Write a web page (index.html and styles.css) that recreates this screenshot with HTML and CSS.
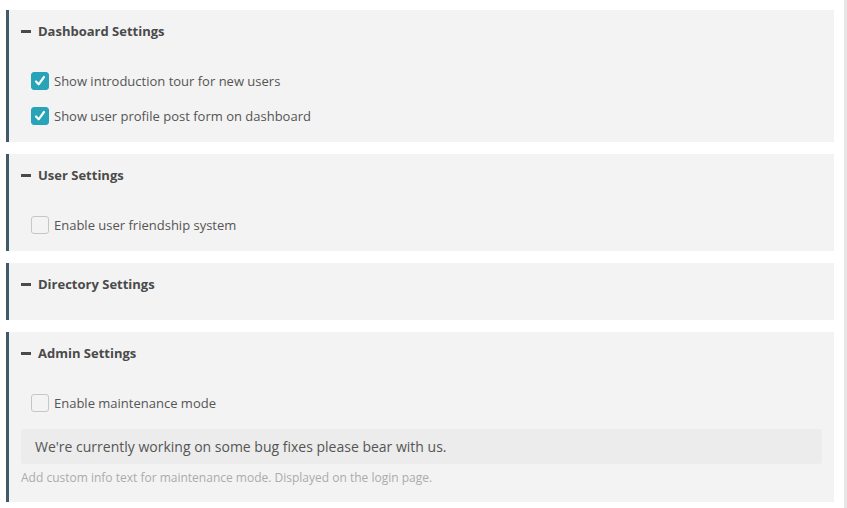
FILE: index.html
```html
<!DOCTYPE html>
<html>

<head>
  <meta charset="utf-8">
  <meta name="viewport" content="width=device-width">
  <title>Settings</title>
  <link rel="stylesheet" href="styles.css">
</head>

<body>
  <div class="panel">
    <h4 class="panel-title"><span class="toggle"></span>Dashboard Settings</h4>
    <div class="panel-body">
      <label class="option"><span class="box checked"><svg viewBox="0 0 18 18"><path d="M4.5 9.5l3 3.2 6-8.2" /></svg></span>Show introduction tour for new users</label>
      <label class="option"><span class="box checked"><svg viewBox="0 0 18 18"><path d="M4.5 9.5l3 3.2 6-8.2" /></svg></span>Show user profile post form on dashboard</label>
    </div>
  </div>

  <div class="panel">
    <h4 class="panel-title"><span class="toggle"></span>User Settings</h4>
    <div class="panel-body">
      <label class="option"><span class="box"></span>Enable user friendship system</label>
    </div>
  </div>

  <div class="panel">
    <h4 class="panel-title"><span class="toggle"></span>Directory Settings</h4>
    <div class="panel-body empty"></div>
  </div>

  <div class="panel">
    <h4 class="panel-title"><span class="toggle"></span>Admin Settings</h4>
    <div class="panel-body">
      <label class="option"><span class="box"></span>Enable maintenance mode</label>
      <div class="field">We're currently working on some bug fixes please bear with us.</div>
      <p class="help">Add custom info text for maintenance mode. Displayed on the login page.</p>
    </div>
  </div>
</body>
</html>
```
FILE: styles.css
```css
html, body {
  margin: 0;
}

body {
  font-family: "Open Sans", Arial, sans-serif;
  color: #555;
  padding: 10px 10px 0 6px;
  border-right: 3px solid #e6e6e6;
  min-height: 100vh;
  box-sizing: border-box;
}

.panel {
  background-color: #f3f3f3;
  border-left: 3px solid #3e5a6b;
  margin-bottom: 12px;
  padding-bottom: 8px;
}

.panel-title {
  display: flex;
  align-items: center;
  height: 42px;
  margin: 0;
  padding-left: 12px;
  font-size: 13px;
  font-weight: 700;
  color: #4a4a4a;
}

.toggle {
  display: inline-block;
  width: 10px;
  height: 3px;
  background-color: #4a4a4a;
  margin-right: 7px;
}

.panel-body {
  padding: 11px 12px 1px;
}

.panel-body.empty {
  padding: 7px 0 0;
}

.option {
  display: flex;
  align-items: center;
  height: 35px;
  padding-left: 10px;
  font-size: 13px;
  color: #555;
}

.box {
  display: inline-block;
  width: 18px;
  height: 18px;
  margin-right: 5px;
  border: 1px solid #c6c6c6;
  border-radius: 3px;
  background-color: #f3f3f3;
  box-sizing: border-box;
}

.box.checked {
  background-color: #27a4b7;
  border-color: #27a4b7;
}

.box svg {
  display: block;
  width: 16px;
  height: 16px;
  fill: none;
  stroke: #fff;
  stroke-width: 2.4;
  stroke-linecap: round;
  stroke-linejoin: round;
}

.field {
  margin-top: 9px;
  height: 35px;
  line-height: 35px;
  padding-left: 14px;
  background-color: #ececec;
  border-radius: 3px;
  font-size: 14px;
  color: #555;
}

.help {
  margin: 6px 0 7px;
  font-size: 12px;
  line-height: 16px;
  color: #ababab;
}
```
